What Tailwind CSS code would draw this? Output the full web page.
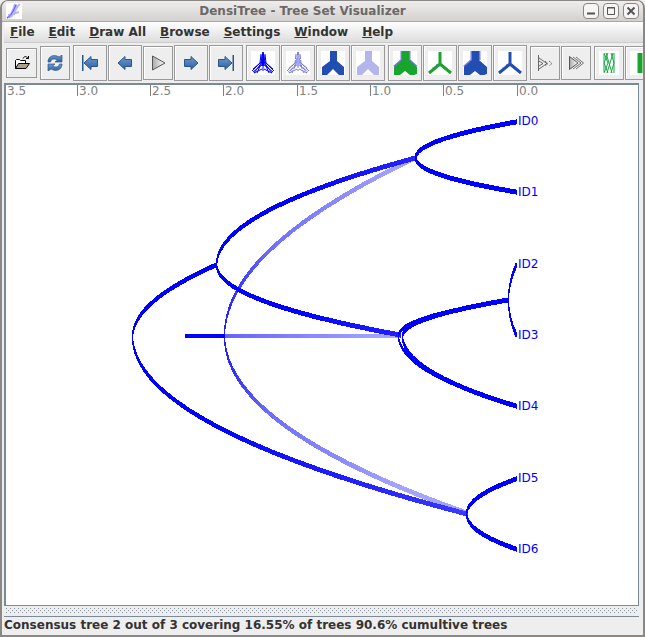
<!DOCTYPE html>
<html lang="en">
<head>
  <meta charset="UTF-8" />
  <meta name="viewport" content="width=device-width, initial-scale=1" />
  <title>DensiTree - Tree Set Visualizer</title>
  <script src="https://cdn.jsdelivr.net/npm/@tailwindcss/browser@4"></script>
</head>
<body class="h-screen flex flex-col overflow-hidden rounded-t-lg border-2 border-t-1 border-[#8a8784] bg-[#eeeeee] font-['DejaVu_Sans',sans-serif] text-xs leading-4 text-[#333333]">
  <!-- title bar -->
  <header class="flex h-[21px] shrink-0 items-center border-b border-[#aaa8a6] bg-linear-to-b from-[#efeeed] to-[#d3d1cf] pl-1 pr-1">
    <svg class="h-4 w-4 bg-white" viewBox="0 0 16 16" fill="none" aria-hidden="true">
      <path d="M1 15C5 13 7 8 9 1M3 15C8 12 8 5 14 1M2 12L13 9M5 14L12 3M10 1L8 12" stroke="#7777ff" stroke-opacity=".55" stroke-width="2" />
      <path d="M1 15C6 12 7 8 10 2" stroke="#4b4bff" />
    </svg>
    <h1 class="flex-1 text-center font-bold text-[#6b6866]">DensiTree - Tree Set Visualizer</h1>
    <div class="flex gap-1">
      <button aria-label="Minimize" class="h-4 w-4 rounded border border-[#888583] bg-[#f6f5f4]"><svg class="h-full w-full" viewBox="0 0 14 14"><path d="M3 9.5H11" stroke="#555" stroke-width="2" /></svg></button>
      <button aria-label="Maximize" class="h-4 w-4 rounded border border-[#888583] bg-[#f6f5f4]"><svg class="h-full w-full" viewBox="0 0 14 14"><path d="M3.5 3.5H10.5V10.5H3.5ZM3 4H11" fill="none" stroke="#555" /></svg></button>
      <button aria-label="Close" class="h-4 w-4 rounded border border-[#888583] bg-[#f6f5f4]"><svg class="h-full w-full" viewBox="0 0 14 14"><path d="M3.5 3.5L10.5 10.5M10.5 3.5L3.5 10.5" stroke="#555" stroke-width="2" /></svg></button>
    </div>
  </header>

  <!-- menu bar -->
  <nav class="ml-0.5 flex h-[21px] shrink-0 items-center gap-3.5 border-b border-[#cccccc] bg-linear-to-b from-white to-[#dddddd] pl-1.5 font-bold">
    <button><u>F</u>ile</button>
    <button><u>E</u>dit</button>
    <button><u>D</u>raw All</button>
    <button><u>B</u>rowse</button>
    <button><u>S</u>ettings</button>
    <button><u>W</u>indow</button>
    <button><u>H</u>elp</button>
  </nav>

  <!-- shared gradients -->
  <svg class="absolute h-0 w-0" aria-hidden="true">
    <defs>
      <linearGradient id="arrow" x1="0" y1="0" x2="0" y2="1"><stop offset="0" stop-color="#6f9bcf" /><stop offset="1" stop-color="#2f5f9e" /></linearGradient>
      <linearGradient id="play" x1="0" y1="0" x2="1" y2="0"><stop offset="0" stop-color="#aaa" /><stop offset="1" stop-color="#fff" /></linearGradient>
    </defs>
  </svg>

  <!-- tool bar -->
  <div role="toolbar" class="flex h-10 shrink-0 items-center gap-[3px] overflow-hidden pl-1">
    <button aria-label="Open" class="flex h-[30px] w-[31px] shrink-0 items-center justify-center border border-[#999999] shadow-[inset_1px_1px_white]">
      <svg class="h-4 w-4" viewBox="0 0 16 16" stroke="#000" fill="none"><path d="M1.5 13.5V5.5L2.5 4.5H5.5L6.5 5.5H11.5V8.5" fill="#fff" /><path d="M1.5 13.5L4.5 8.5H15.5L12 13.5Z" fill="#aaa28e" /><path d="M9 3.5C10 1 13 1 14 3.5M12 3.5H14.5V1" /></svg>
    </button>
    <button aria-label="Reload" class="flex h-[34px] w-[30px] shrink-0 items-center justify-center border border-[#999999] shadow-[inset_1px_1px_white]">
      <svg class="h-4 w-4" viewBox="0 0 16 16" fill="url(#arrow)" stroke="#27568f" stroke-width=".7"><path d="M1 7C1 1 7-1 12 2L15 0V7H8L10.5 5C7 3 4 4 3.5 7Z" /><path d="M15 9C15 15 9 17 4 14L1 16V9H8L5.5 11C9 13 12 12 12.5 9Z" /></svg>
    </button>
    <div class="flex shrink-0 items-center gap-px">
      <button aria-label="First" class="flex h-9 w-[34px] items-center justify-center border border-[#999999] shadow-[inset_1px_1px_white]">
        <svg class="h-4 w-4" viewBox="0 0 16 16"><path d="M.5 0V16" stroke="#27568f" stroke-width="2" /><path d="M2 8L9 1.5V4.5H15.5V11.5H9V14.5Z" fill="url(#arrow)" stroke="#27568f" /></svg>
      </button>
      <button aria-label="Previous" class="flex h-9 w-[34px] items-center justify-center border border-[#999999] shadow-[inset_1px_1px_white]">
        <svg class="h-4 w-4" viewBox="0 0 16 16"><path d="M1 8L8 1.5V4.5H14.5V11.5H8V14.5Z" fill="url(#arrow)" stroke="#27568f" /></svg>
      </button>
      <button aria-label="Play" class="flex h-[34px] w-[30px] items-center justify-center border border-[#999999] shadow-[inset_1px_1px_white]">
        <svg class="h-4 w-4" viewBox="0 0 16 16"><path d="M2.5 1V15L15 8Z" fill="url(#play)" stroke="#555" /></svg>
      </button>
      <button aria-label="Next" class="flex h-9 w-[34px] items-center justify-center border border-[#999999] shadow-[inset_1px_1px_white]">
        <svg class="h-4 w-4" viewBox="0 0 16 16"><path d="M15 8L8 1.5V4.5H1.5V11.5H8V14.5Z" fill="url(#arrow)" stroke="#27568f" /></svg>
      </button>
      <button aria-label="Last" class="flex h-9 w-[34px] items-center justify-center border border-[#999999] shadow-[inset_1px_1px_white]">
        <svg class="h-4 w-4" viewBox="0 0 16 16"><path d="M15.5 0V16" stroke="#27568f" stroke-width="2" /><path d="M14 8L7 1.5V4.5H.5V11.5H7V14.5Z" fill="url(#arrow)" stroke="#27568f" /></svg>
      </button>
    </div>
    <div class="flex shrink-0 items-center gap-px">
      <button aria-label="Draw tree set" class="flex h-9 w-[34px] items-center justify-center border border-[#999999] shadow-[inset_1px_1px_white]">
        <svg class="h-6 w-6 bg-white" viewBox="0 0 24 24" fill="none" stroke="#0000ee"><path d="M12 1V13M12 1L10 11L1 20M12 1L14 11L23 20M10 3L9 12L2 18M14 3L15 12L22 18M12 13L2 21M12 13L22 21M11 11L3 22L11 18M13 11L21 22L13 18M12 8L6 22M12 8L18 22M12 12V20" /><path d="M12 4V15" stroke-width="3" /></svg>
      </button>
      <button aria-label="Draw light tree set" class="flex h-9 w-[34px] items-center justify-center border border-[#999999] shadow-[inset_1px_1px_white]">
        <svg class="h-6 w-6 bg-white" viewBox="0 0 24 24" fill="none" stroke="#7777df"><path d="M12 1V13M12 1L10 11L1 20M12 1L14 11L23 20M10 3L9 12L2 18M14 3L15 12L22 18M12 13L2 21M12 13L22 21M11 11L3 22L11 18M13 11L21 22L13 18M12 8L6 22M12 8L18 22M12 12V20" stroke-dasharray="5 1" /><path d="M12 4V15" stroke="#a5a5ee" stroke-width="3" /></svg>
      </button>
      <button aria-label="Draw root canal" class="flex h-9 w-[34px] items-center justify-center border border-[#999999] shadow-[inset_1px_1px_white]">
        <svg class="h-6 w-6 bg-white" viewBox="0 0 24 24"><path d="M9 0H16V10L23 16V24H18L12 18L6 24H1V16L9 10Z" fill="#224eb2" /></svg>
      </button>
      <button aria-label="Draw light root canal" class="flex h-9 w-[34px] items-center justify-center border border-[#999999] shadow-[inset_1px_1px_white]">
        <svg class="h-6 w-6 bg-white" viewBox="0 0 24 24"><path d="M9 0H16V10L23 16V24H18L12 18L6 24H1V16L9 10Z" fill="#b5b5ee" /></svg>
      </button>
    </div>
    <div class="flex shrink-0 items-center gap-px">
      <button aria-label="Green wide tree" class="flex h-9 w-[34px] items-center justify-center border border-[#999999] shadow-[inset_1px_1px_white]">
        <svg class="h-6 w-6 bg-white" viewBox="0 0 24 24"><path d="M8.5 0V9L1 15.5M16.5 0V9L23.5 15.5" fill="none" stroke="#7777ee" stroke-width="2" /><path d="M9 0H16V9L24 16V23L21 24H17L12 20L7 24H1V16L9 9Z" fill="#18a52d" /></svg>
      </button>
      <button aria-label="Green thin tree" class="flex h-9 w-[34px] items-center justify-center border border-[#999999] shadow-[inset_1px_1px_white]">
        <svg class="h-6 w-6 bg-white" viewBox="0 0 24 24"><path d="M12 1V14M12 13L1 22M12 13L23 22" stroke="#18a52d" stroke-width="3" /><path d="M9 13L2 19" stroke="#7777ee" stroke-dasharray="1 4" /></svg>
      </button>
      <button aria-label="Blue wide tree" class="flex h-9 w-[34px] items-center justify-center border border-[#999999] shadow-[inset_1px_1px_white]">
        <svg class="h-6 w-6 bg-white" viewBox="0 0 24 24"><path d="M8.5 0V9L1 15.5M16.5 0V9" fill="none" stroke="#7777ee" stroke-width="2" /><path d="M9 0H16V9L24 16V23L21 24H17L12 20L7 24H1V16L9 9Z" fill="#224eb2" /></svg>
      </button>
      <button aria-label="Blue thin tree" class="flex h-9 w-[34px] items-center justify-center border border-[#999999] shadow-[inset_1px_1px_white]">
        <svg class="h-6 w-6 bg-white" viewBox="0 0 24 24"><path d="M12 1V14M12 13L1 22M12 13L23 22" stroke="#224eb2" stroke-width="3" /><path d="M9 13L2 19" stroke="#7777ee" stroke-dasharray="1 4" /></svg>
      </button>
    </div>
    <div class="flex shrink-0 items-center gap-px">
      <button aria-label="Rotate" class="flex h-[34px] w-[30px] items-center justify-center border border-[#999999] shadow-[inset_1px_1px_white]">
        <svg class="h-4 w-4" viewBox="0 0 16 16" fill="none" stroke="#444"><path d="M1.5 0V16M2 3L10 8.5L2 14M2 6L6 8.5L2 11" stroke-width=".8" /><path d="M8 6L11 8.5L8 11M12 6L15 8.5L12 11" stroke-dasharray="1 1" /></svg>
      </button>
      <button aria-label="Fast rotate" class="flex h-[34px] w-[30px] items-center justify-center border border-[#999999] shadow-[inset_1px_1px_white]">
        <svg class="h-4 w-4" viewBox="0 0 16 16" fill="url(#play)" stroke="#555"><path d="M1.5 1.5V14.5L10 8Z" /><path d="M5 2L13 8L5 14M8 2L15.5 8L8 14" fill="none" stroke-width=".8" /></svg>
      </button>
    </div>
    <div class="flex shrink-0 items-center gap-px">
      <button aria-label="Unsorted" class="flex h-[34px] w-[30px] items-center justify-center border border-[#999999] shadow-[inset_1px_1px_white]">
        <svg class="h-6 w-5 bg-white" viewBox="0 0 20 24" fill="none" stroke="#18a544"><path d="M5 2L9 12L5 22M7 2L13 22M9 2L5 12L9 22M14 2L8 22M12 2L15 12L12 22M5 3V21M15 2V22" /></svg>
      </button>
      <button aria-label="Sorted" class="flex h-[34px] w-[30px] items-center justify-center border border-[#999999] shadow-[inset_1px_1px_white]">
        <svg class="h-6 w-5 bg-white" viewBox="0 0 20 24"><path d="M10 2V22" stroke="#18a52d" stroke-width="5" /></svg>
      </button>
    </div>
  </div>

  <!-- tree panel -->
  <main class="mx-0.5 mr-1 flex min-h-0 flex-1 flex-col border border-t-2 border-l-2 border-[#7a8a99] bg-white">
    <svg class="min-h-0 w-full flex-1" viewBox="6 85 632 520" role="img" aria-label="Consensus trees">
      <defs>
        <linearGradient id="fadeA" gradientUnits="userSpaceOnUse" x1="217" y1="0" x2="415" y2="0"><stop offset=".4" stop-color="#0000ff" /><stop offset="1" stop-color="#2626ff" /></linearGradient>
        <linearGradient id="fadeB" gradientUnits="userSpaceOnUse" x1="225" y1="0" x2="400" y2="0"><stop offset="0" stop-color="#2222ff" /><stop offset=".25" stop-color="#6e6eff" /><stop offset="1" stop-color="#a4a4ff" /></linearGradient>
        <linearGradient id="fadeC" gradientUnits="userSpaceOnUse" x1="133" y1="0" x2="467" y2="0"><stop offset=".2" stop-color="#0000ff" /><stop offset="1" stop-color="#3a3aff" /></linearGradient>
        <linearGradient id="fadeD" gradientUnits="userSpaceOnUse" x1="225" y1="0" x2="400" y2="0"><stop offset="0" stop-color="#6464ff" /><stop offset="1" stop-color="#acacff" /></linearGradient>
      </defs>
      <!-- time axis -->
      <g stroke="#808080" shape-rendering="crispEdges"><path d="M77.5 85V96M150.5 85V96M223.5 85V96M297.5 85V96M370.5 85V96M443.5 85V96M517.5 85V96" /></g>
      <g class="text-xs" fill="#808080">
        <text x="7" y="95">3.5</text><text x="79" y="95">3.0</text><text x="152" y="95">2.5</text><text x="225" y="95">2.0</text><text x="299" y="95">1.5</text><text x="372" y="95">1.0</text><text x="445" y="95">0.5</text><text x="519" y="95">0.0</text>
      </g>
      <!-- branches: each is a parabola swept by a 1x4 pen -->
      <g stroke-width="1" shape-rendering="crispEdges">
        <path d="M224.5 334Q224.5 247 415 156V160Q224.5 251 224.5 338Z" fill="url(#fadeB)" stroke="url(#fadeB)" />
        <path d="M224.5 334Q224.5 425 467 511V515Q224.5 429 224.5 338Z" fill="url(#fadeB)" stroke="url(#fadeB)" />
        <path d="M225 334H400V338H225Z" fill="url(#fadeD)" />
        <path d="M216.5 263Q216.5 210 415 156V160Q216.5 214 216.5 267Z" fill="url(#fadeA)" stroke="url(#fadeA)" />
        <path d="M216.5 263Q216.5 299 400 333V337Q216.5 303 216.5 267Z" fill="url(#fadeA)" stroke="url(#fadeA)" />
        <path d="M132.5 334Q132.5 425 467 512V516Q132.5 429 132.5 338Z" fill="url(#fadeC)" stroke="url(#fadeC)" />
      </g>
      <g fill="#0000ff" stroke="#0000ff" stroke-width="1" shape-rendering="crispEdges">
        <path d="M185 334H225V338H185Z" stroke="none" />
        <path d="M132.5 335Q132.5 300 216 263V267Q132.5 304 132.5 339Z" />
        <path d="M415.5 156Q415.5 138 516 120V124Q415.5 142 415.5 160Z" />
        <path d="M415.5 156Q415.5 173 516 190V194Q415.5 177 415.5 160Z" />
        <path d="M398.5 334Q398.5 316 508 299V302Q398.5 320 398.5 337Z" />
        <path d="M402.5 334Q402.5 316 508 298V302Q402.5 320 402.5 338Z" />
        <path d="M398.5 334Q398.5 370 516 405V407Q398.5 373 398.5 337Z" />
        <path d="M402.5 334Q402.5 370 516 404V408Q402.5 374 402.5 338Z" />
        <path d="M508.5 298Q508.5 281 516 263V268Q508.5 285 508.5 302Z" />
        <path d="M508.5 298Q508.5 316 516 332V337Q508.5 320 508.5 302Z" />
        <path d="M466.5 512Q466.5 495 516 477V481Q466.5 499 466.5 516Z" />
        <path d="M466.5 512Q466.5 530 516 547V551Q466.5 534 466.5 516Z" />
      </g>
      <!-- taxa -->
      <g class="text-xs" fill="#0000ff">
        <text x="518" y="125">ID0</text><text x="518" y="196">ID1</text><text x="518" y="268">ID2</text><text x="518" y="339">ID3</text><text x="518" y="410">ID4</text><text x="518" y="482">ID5</text><text x="518" y="553">ID6</text>
      </g>
    </svg>
  </main>

  <!-- divider grip -->
  <div class="mx-0.5 mr-1 flex h-[11px] shrink-0 items-center border-b border-[#7a8a99] px-0.5">
    <svg class="h-1.5 w-full" aria-hidden="true" shape-rendering="crispEdges">
      <defs><pattern id="dots" width="4" height="4" patternUnits="userSpaceOnUse"><path d="M0 0H1V1H0ZM2 2H3V3H2Z" fill="#8c96a0" /></pattern></defs>
      <rect width="100%" height="5" fill="url(#dots)" />
    </svg>
  </div>

  <footer class="h-[18px] shrink-0 truncate pl-0.5 font-bold">Consensus tree 2 out of 3 covering 16.55% of trees 90.6% cumultive trees</footer>
</body>
</html>
